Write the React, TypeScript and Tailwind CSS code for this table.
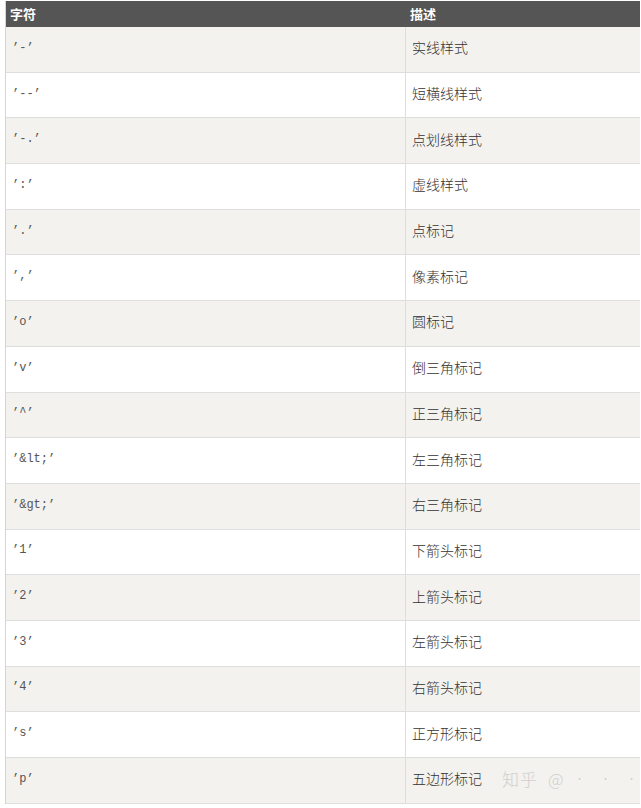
import React from "react";

const rows: [string, string][] = [
  ["’-’", "实线样式"],
  ["’--’", "短横线样式"],
  ["’-.’", "点划线样式"],
  ["’:’", "虚线样式"],
  ["’.’", "点标记"],
  ["’,’", "像素标记"],
  ["’o’", "圆标记"],
  ["’v’", "倒三角标记"],
  ["’^’", "正三角标记"],
  ["’&lt;’", "左三角标记"],
  ["’&gt;’", "右三角标记"],
  ["’1’", "下箭头标记"],
  ["’2’", "上箭头标记"],
  ["’3’", "左箭头标记"],
  ["’4’", "右箭头标记"],
  ["’s’", "正方形标记"],
  ["’p’", "五边形标记"],
];

const cjk = "font-['Noto_Sans_CJK_SC','Noto_Sans',sans-serif]";

export default function App() {
  return (
    <div className="w-[641px] h-[808px] bg-white overflow-hidden pt-px">
      <div className="ml-[5px] mr-[1px] border-l border-[#d4d4d4]">
        <div className={`flex h-[26px] bg-[#555555] text-white text-[13px] font-bold ${cjk}`}>
          <div className="w-[399px] pl-[4px] flex items-center">字符</div>
          <div className="flex-1 pl-[5px] flex items-center">描述</div>
        </div>
        {rows.map(([k, v], i) => (
          <div
            key={i}
            className={`flex h-[45.7px] border-b border-[#dedede] ${i % 2 === 0 ? "bg-[#f3f2ee]" : "bg-white"}`}
          >
            <div className="w-[399px] pl-[6px] pb-[3px] flex items-center text-[12px] text-[#555] font-['Liberation_Mono',monospace]">
              {k}
            </div>
            <div className={`flex-1 border-l border-[#dedede] pl-[6px] pb-[3px] flex items-center text-[14px] text-[#333] font-light ${cjk}`}>
              <span>{v}</span>
              {i === rows.length - 1 && (
                <span className="ml-[20px] text-[17px] text-[#d0d0d0] tracking-[1px] flex items-center">
                  知乎
                  <span className="ml-[10px]">@</span>
                  <span className="ml-[10px] text-[10px]">·</span>
                  <span className="ml-[15px] text-[10px]">·</span>
                  <span className="ml-[15px] text-[10px]">·</span>
                </span>
              )}
            </div>
          </div>
        ))}
      </div>
    </div>
  );
}
